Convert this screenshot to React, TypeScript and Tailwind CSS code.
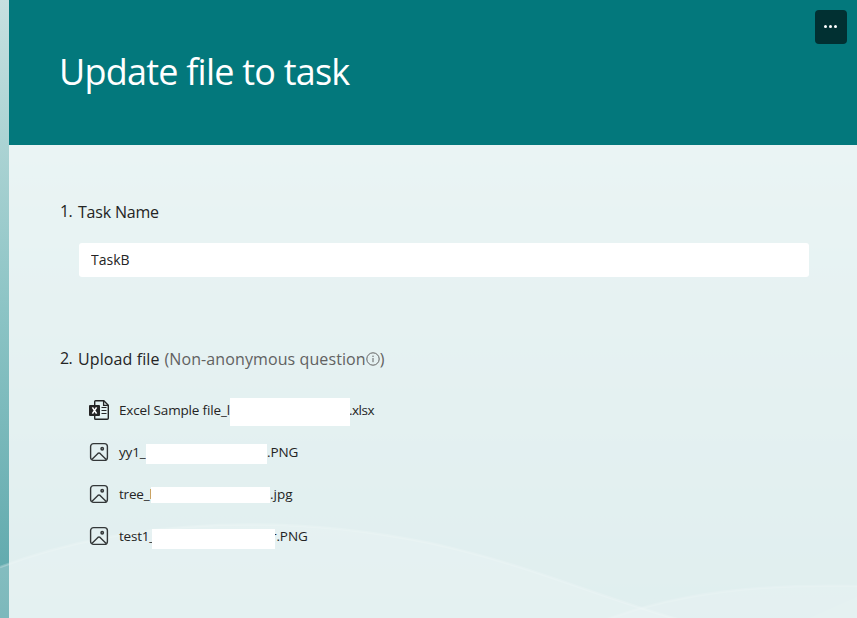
import type { ReactNode } from 'react'

const files = [
  {
    type: 'excel',
    name: 'Excel Sample file_l',
    ext: '.xlsx',
    nameClass: 'w-[111px] tracking-[-0.16px]',
    maskClass: 'w-[120px] h-7 mt-1',
    extClass: '-ml-px tracking-[-0.5px]',
  },
  {
    type: 'image',
    name: 'yy1_',
    ext: '.PNG',
    nameClass: 'w-[27px] tracking-[-0.2px]',
    maskClass: 'w-[121px] h-5 mt-1',
    extClass: 'tracking-[-0.1px]',
  },
  {
    type: 'image',
    name: 'tree_l',
    ext: '.jpg',
    nameClass: 'w-8 tracking-[-0.2px]',
    maskClass: 'w-[119px] h-4 mt-0.5',
    extClass: 'tracking-[0.05px]',
  },
  {
    type: 'image',
    name: 'test1_',
    ext: 'r.PNG',
    nameClass: 'w-[33px] tracking-[-0.2px]',
    maskClass: 'w-[123px] h-5 mt-1.5',
    extClass: '-ml-[4px] tracking-[-0.1px]',
  },
]

function ExcelIcon() {
  return (
    <svg width="20" height="20" viewBox="0 0 20 20" fill="none" className="shrink-0">
      <path d="M5.7 5V1.6Q5.7.7 6.6.7H14.8L19.3 5.2V18.2Q19.3 19.3 18.2 19.3H6.6Q5.7 19.3 5.7 18.4V16" stroke="#242424" strokeWidth="1.4" />
      <path d="M14.6.8V5.4H19.2" stroke="#242424" strokeWidth="1.3" />
      <path d="M12.5 7.5H17.5M12.5 10.5H17.5M12.5 13.5H17.5" stroke="#242424" strokeWidth="1.1" />
      <rect x="0" y="5" width="11" height="11" rx="1" fill="#242424" />
      <path d="M3.4 7.4L7.6 13.6M7.6 7.4L3.4 13.6" stroke="#fff" strokeWidth="1.6" />
    </svg>
  )
}

function ImageIcon() {
  return (
    <svg width="20" height="20" viewBox="0 0 20 20" fill="none" className="shrink-0" stroke="#333738">
      <rect x="1.6" y="1.6" width="16.8" height="16.8" rx="3" strokeWidth="1.4" />
      <path d="M2.8 17.4L8.9 11.4Q10 10.5 11.1 11.4L17.2 17.4" strokeWidth="1.4" />
      <circle cx="13.2" cy="6.7" r="1.2" strokeWidth="1.5" />
    </svg>
  )
}

function InfoIcon() {
  return (
    <svg width="14" height="14" viewBox="0 0 14 14" fill="none" className="shrink-0">
      <circle cx="7" cy="7" r="6.2" stroke="#616161" />
      <path d="M7 6V10.2" stroke="#616161" />
      <circle cx="7" cy="4.2" r=".7" fill="#616161" />
    </svg>
  )
}

function Waves() {
  return (
    <svg className="absolute inset-0" width="857" height="618" viewBox="0 0 857 618" fill="none">
      <path d="M0 567C140 514 300 516 430 543C530 565 590 594 680 620H0Z" fill="#fff" fillOpacity=".21" />
      <path d="M0 567C140 514 300 516 430 543C530 565 590 594 680 620" stroke="#fff" strokeOpacity=".22" strokeWidth="2.5" />
      <path d="M605 620C680 592 760 584 857 586V620Z" fill="#fff" fillOpacity=".18" />
      <path d="M605 620C680 592 760 584 857 586" stroke="#fff" strokeOpacity=".18" strokeWidth="2.5" />
      <path d="M805 620L857 597V620Z" fill="#fff" fillOpacity=".08" />
    </svg>
  )
}

function Question({ number, title, children }: { number: number; title: ReactNode; children: ReactNode }) {
  return (
    <section className="flex">
      <span className="w-[18px] shrink-0 text-base leading-[22px] -mt-px tracking-[-0.6px]">{number}.</span>
      <div className="flex-1">
        <h2 className="flex items-center text-base leading-[22px]">{title}</h2>
        {children}
      </div>
    </section>
  )
}

export default function App() {
  return (
    <div className="relative flex h-[618px] w-[857px] overflow-hidden bg-linear-to-b from-[#c6e0e0] via-[#8cc4c5] via-50% to-[#5aa6aa] pl-[9px] font-['Open_Sans','Noto_Sans',sans-serif] text-[#242424]">
      <Waves />
      <div className="relative flex flex-1 flex-col">
        <header className="flex h-[145px] shrink-0 items-start justify-between bg-[#03787c] pr-2.5 pt-2.5">
          <h1 className="pl-[50px] pt-[38px] text-4xl leading-[48px] tracking-[-0.78px] text-white">Update file to task</h1>
          <button className="flex h-[34px] w-8 items-center justify-center gap-0.5 rounded-[4px] bg-[#013032] pr-px pb-px">
            <i className="size-[3px] rounded-full bg-white" />
            <i className="size-[3px] rounded-full bg-white" />
            <i className="size-[3px] rounded-full bg-white" />
          </button>
        </header>
        <main className="flex-1 bg-[#f3f8f8]/88 pl-[51px] pr-12 pt-14">
          <Question number={1} title={<span className="tracking-[-0.2px]">Task Name</span>}>
            <input
              className="mt-5 ml-px block h-[34px] w-[730px] rounded-[3px] bg-white px-3 pb-0.5 text-sm outline-none"
              defaultValue="TaskB"
            />
          </Question>
          <div className="h-[71px]" />
          <Question
            number={2}
            title={
              <>
                <span className="tracking-[0.1px]">Upload file</span>
                <span className="ml-[5px] tracking-[0.1px] text-[#616161]">(Non-anonymous question</span>
                <InfoIcon />
                <span className="text-[#616161]">)</span>
              </>
            }
          >
            <ul className="mt-[19px] pl-[11px]">
              {files.map((file) => (
                <li key={file.name} className="flex h-[42px] items-center text-[13.5px]">
                  {file.type === 'excel' ? <ExcelIcon /> : <ImageIcon />}
                  <span className={`ml-2.5 shrink-0 whitespace-nowrap pt-px ${file.nameClass}`}>{file.name}</span>
                  <span className={`relative z-10 shrink-0 bg-white ${file.maskClass}`} />
                  <span className={`whitespace-nowrap pt-px ${file.extClass}`}>{file.ext}</span>
                </li>
              ))}
            </ul>
          </Question>
        </main>
      </div>
    </div>
  )
}
